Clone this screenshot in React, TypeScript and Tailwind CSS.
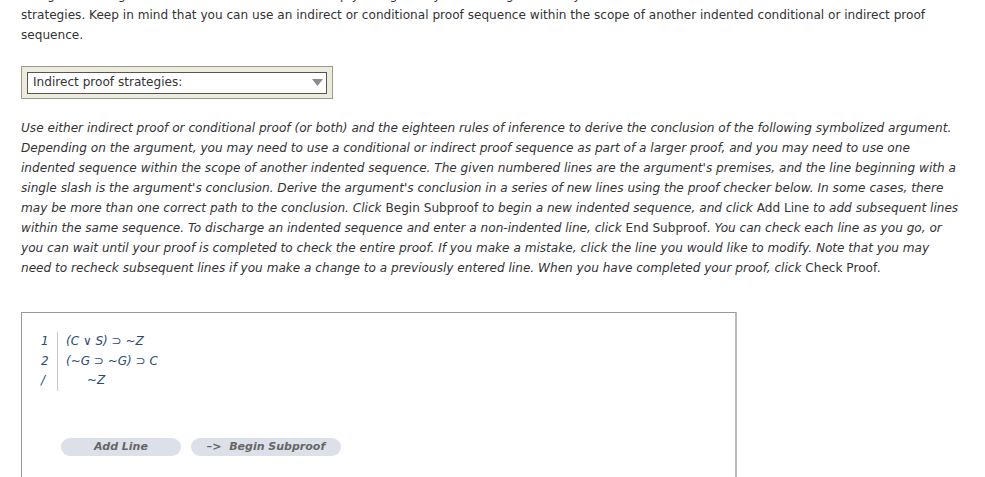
export default function App() {
	return (
		<main
			className="h-screen overflow-hidden bg-white pl-[21px] pr-[30px] text-[12.1px] leading-[20px] text-[#333]"
			style={{ fontFamily: "Verdana, 'DejaVu Sans', sans-serif" }}
		>
			<p className="-mt-[15px] w-[940px] whitespace-nowrap">
				Using the strategies described in this section will help you organize your thinking, but always feel free to consider other
				<br />
				strategies. Keep in mind that you can use an indirect or conditional proof sequence within the scope of another indented conditional or indirect proof
				<br />
				sequence.
			</p>

			<div className="mt-[21px] flex h-[33px] w-[312px] items-center justify-center border border-[#9a9a8e] bg-[#ecebdc]">
				<div className="flex h-[22px] w-[300px] items-center justify-between border border-[#555] bg-white pl-[5px] pr-[3px]">
					<span className="leading-none">Indirect proof strategies:</span>
					<svg width="11" height="7" viewBox="0 0 11 7">
						<polygon points="0,0 11,0 5.5,7" fill="#8c8c8c" />
					</svg>
				</div>
			</div>

			<p className="mt-[19px] w-[940px] whitespace-nowrap italic">
				Use either indirect proof or conditional proof (or both) and the eighteen rules of inference to derive the conclusion of the following symbolized argument.
				<br />
				Depending on the argument, you may need to use a conditional or indirect proof sequence as part of a larger proof, and you may need to use one
				<br />
				indented sequence within the scope of another indented sequence. The given numbered lines are the argument's premises, and the line beginning with a
				<br />
				single slash is the argument's conclusion. Derive the argument's conclusion in a series of new lines using the proof checker below. In some cases, there
				<br />
				may be more than one correct path to the conclusion. Click <span className="not-italic">Begin Subproof</span> to begin a new indented sequence, and click{" "}
				<span className="not-italic">Add Line</span> to add subsequent lines
				<br />
				within the same sequence. To discharge an indented sequence and enter a non-indented line, click <span className="not-italic">End Subproof</span>. You
				can check each line as you go, or
				<br />
				you can wait until your proof is completed to check the entire proof. If you make a mistake, click the line you would like to modify. Note that you may
				<br />
				need to recheck subsequent lines if you make a change to a previously entered line. When you have completed your proof, click{" "}
				<span className="not-italic">Check Proof</span>.
			</p>

			<section className="mt-[34px] h-[200px] w-[716px] border-t border-l border-[#999] border-r-2 border-r-[#bdbdbd] pt-[19px]">
				<div className="ml-[19px] flex text-[12px] text-[#2a4a78] italic">
					<div className="w-[16px] leading-[19.5px]">
						<div>1</div>
						<div>2</div>
						<div>/</div>
					</div>
					<div className="border-l border-[#c8c8c8] pl-[8px] leading-[19.5px]">
						<div>(C ∨ S) ⊃ ~Z</div>
						<div>(~G ⊃ ~G) ⊃ C</div>
						<div className="pl-[21px]">~Z</div>
					</div>
				</div>

				<div className="mt-[47px] ml-[39px] flex gap-[10px] text-[11px] font-bold italic text-[#666]">
					<button className="h-[18px] w-[120px] rounded-full bg-[#dce1e9] leading-[18px]">Add Line</button>
					<button className="h-[18px] w-[150px] rounded-full bg-[#dce1e9] leading-[18px]">
						–&gt;&nbsp; Begin Subproof
					</button>
				</div>
			</section>
		</main>
	);
}
